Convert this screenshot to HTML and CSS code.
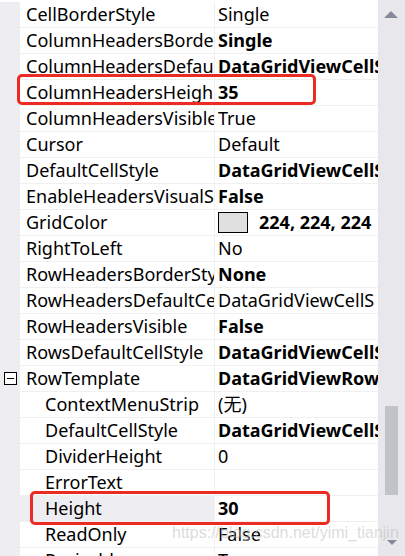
FILE: index.html
```html
<!DOCTYPE html>
<html>
<head>
<meta charset="utf-8">
<link rel="stylesheet" href="styles.css">
</head>
<body>
<div class="frame">
  <div class="main">
    <div class="rows">
      <div class="row"><div class="gut"></div><div class="name">CellBorderStyle</div><div class="val">Single</div></div>
      <div class="row"><div class="gut"></div><div class="name">ColumnHeadersBorde</div><div class="val b">Single</div></div>
      <div class="row"><div class="gut"></div><div class="name">ColumnHeadersDefau</div><div class="val b">DataGridViewCellS</div></div>
      <div class="row"><div class="gut"></div><div class="name">ColumnHeadersHeigh</div><div class="val b">35</div></div>
      <div class="row"><div class="gut"></div><div class="name">ColumnHeadersVisible</div><div class="val">True</div></div>
      <div class="row"><div class="gut"></div><div class="name">Cursor</div><div class="val">Default</div></div>
      <div class="row"><div class="gut"></div><div class="name">DefaultCellStyle</div><div class="val b">DataGridViewCellS</div></div>
      <div class="row"><div class="gut"></div><div class="name">EnableHeadersVisualS</div><div class="val b">False</div></div>
      <div class="row"><div class="gut"></div><div class="name">GridColor</div><div class="val b"><span class="swatch"></span><span class="swtext">224, 224, 224</span></div></div>
      <div class="row"><div class="gut"></div><div class="name">RightToLeft</div><div class="val">No</div></div>
      <div class="row"><div class="gut"></div><div class="name">RowHeadersBorderSty</div><div class="val b">None</div></div>
      <div class="row"><div class="gut"></div><div class="name">RowHeadersDefaultCe</div><div class="val">DataGridViewCellS</div></div>
      <div class="row"><div class="gut"></div><div class="name">RowHeadersVisible</div><div class="val b">False</div></div>
      <div class="row"><div class="gut"></div><div class="name">RowsDefaultCellStyle</div><div class="val b">DataGridViewCellS</div></div>
      <div class="row"><div class="gut"><span class="toggle"></span></div><div class="name">RowTemplate</div><div class="val b">DataGridViewRow</div></div>
      <div class="row"><div class="gut"></div><div class="name sub">ContextMenuStrip</div><div class="val">(无)</div></div>
      <div class="row"><div class="gut"></div><div class="name sub">DefaultCellStyle</div><div class="val b">DataGridViewCellS</div></div>
      <div class="row"><div class="gut"></div><div class="name sub">DividerHeight</div><div class="val">0</div></div>
      <div class="row"><div class="gut"></div><div class="name sub">ErrorText</div><div class="val"></div></div>
      <div class="row sel"><div class="gut"></div><div class="name sub">Height</div><div class="val b">30</div></div>
      <div class="row"><div class="gut"></div><div class="name sub">ReadOnly</div><div class="val">False</div></div>
      <div class="row"><div class="gut"></div><div class="name sub">Resizable</div><div class="val">True</div></div>
    </div>
  </div>
  <div class="scroll">
    <div class="arrow up"></div>
    <div class="track"><div class="thumb"></div></div>
    <div class="arrow down"></div>
  </div>
  <div class="mark mark1"></div>
  <div class="mark mark2"></div>
  <div class="wm">https://blog.csdn.net/yimi_tianjin</div>
</div>
</body>
</html>
```

FILE: styles.css
```css
html, body {
  margin: 0;
  padding: 0;
  background: #ffffff;
}
body {
  width: 405px;
  height: 556px;
  overflow: hidden;
  font-family: "Noto Sans", "Noto Sans CJK SC", sans-serif;
  font-size: 18px;
  color: #000000;
}
.frame {
  position: relative;
  display: flex;
  width: 405px;
  height: 556px;
  overflow: hidden;
}
.main {
  width: 378px;
  flex: none;
  padding-top: 2px;
  background: #ffffff;
}
.rows {
  display: flex;
  flex-direction: column;
}
.row {
  display: grid;
  grid-template-columns: 20px 194px 164px;
  height: 26px;
  flex: none;
}
.gut {
  background: #eeeef2;
  position: relative;
}
.name, .val {
  height: 25px;
  line-height: 25px;
  border-bottom: 1px solid #f0f0f0;
  white-space: nowrap;
  overflow: hidden;
}
.name {
  padding-left: 6px;
}
.name.sub {
  padding-left: 25px;
}
.val {
  border-left: 1px solid #f0f0f0;
  padding-left: 3px;
  display: flex;
  align-items: center;
}
.b {
  font-weight: bold;
}
.sel .name {
  background: #eeeef2;
}
.swatch {
  flex: none;
  width: 28px;
  height: 19px;
  background: #e0e0e0;
  border: 1px solid #000000;
}
.swtext {
  margin-left: 11px;
}
.toggle {
  position: absolute;
  left: 4px;
  top: 6px;
  width: 11px;
  height: 11px;
  border: 1px solid #000000;
  background: #ffffff;
}
.toggle::after {
  content: "";
  position: absolute;
  left: 2px;
  right: 2px;
  top: 5px;
  height: 1px;
  background: #000000;
}
.scroll {
  flex: 1;
  background: #e8e8ec;
  display: flex;
  flex-direction: column;
}
.arrow {
  flex: none;
  height: 27px;
  width: 100%;
  position: relative;
}
.arrow.up::after {
  content: "";
  position: absolute;
  left: 6px;
  top: 11px;
  border-left: 7px solid transparent;
  border-right: 7px solid transparent;
  border-bottom: 7px solid #868999;
}
.arrow.down::after {
  content: "";
  position: absolute;
  left: 9px;
  top: 11px;
  border-left: 5px solid transparent;
  border-right: 5px solid transparent;
  border-top: 5px solid #868999;
}
.track {
  flex: 1;
  width: 100%;
  position: relative;
}
.thumb {
  position: absolute;
  left: 7px;
  width: 13px;
  top: 379px;
  height: 89px;
  background: #c2c3c9;
}
.mark {
  position: absolute;
  border: 3px solid #ec2b24;
  border-radius: 5px;
}
.mark1 {
  left: 17px;
  top: 74px;
  width: 293px;
  height: 25px;
}
.mark2 {
  left: 30px;
  top: 491px;
  width: 294px;
  height: 28px;
}
.wm {
  position: absolute;
  left: 172px;
  top: 524px;
  font-family: "Liberation Sans", sans-serif;
  font-size: 16px;
  color: rgba(190, 190, 190, 0.55);
  white-space: nowrap;
  pointer-events: none;
}
```
